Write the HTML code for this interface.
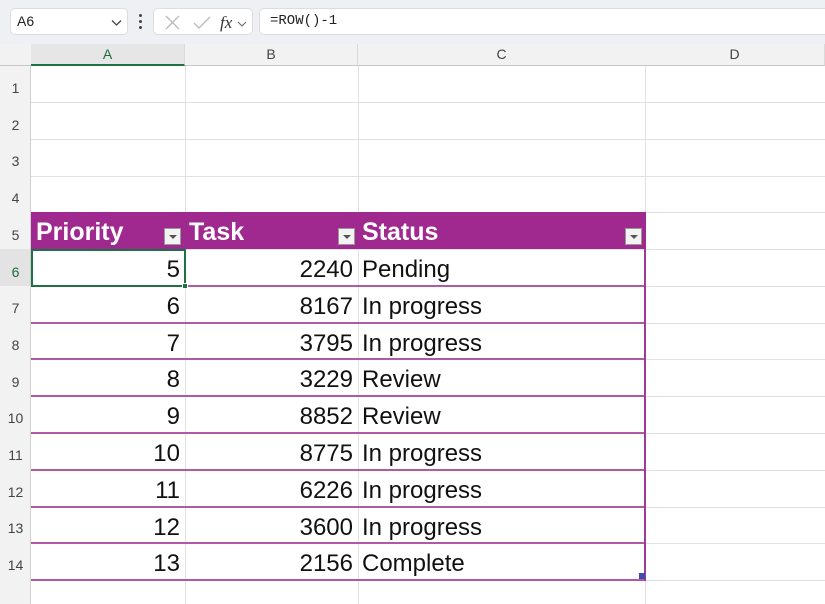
<!DOCTYPE html><html><head><style>
body{margin:0;width:825px;height:604px;overflow:hidden;background:#fff;font-family:"Liberation Sans",sans-serif;position:relative}
div{position:absolute;box-sizing:border-box}
.tb{left:0;top:0;width:825px;height:44px;background:#eef0f3}
.box{background:#fff;border:1px solid #dcdde0;border-radius:5px;top:8px;height:27px}
.ch{top:44px;height:22px;background:#f2f2f2;border-bottom:1px solid #c6c6c6;border-right:1px solid #dadada;font-size:14px;color:#444;text-align:center;line-height:21px}
.rh{left:0;width:31px;background:#f2f2f2;border-right:1px solid #d0d0d0;font-size:14px;color:#444;text-align:center}
.h{height:1px;background:#e1e1e1;left:0;width:825px}
.v{width:1px;background:#e1e1e1;top:66px;height:538px}
.t{font-size:24px;color:#111;white-space:nowrap}
.r{text-align:right}
.pl{height:2px;background:#b05aa6;left:31px;width:615px}
.hd{font-size:25px;color:#fff;font-weight:bold;top:218px}
.fb{width:17px;height:17px;background:#f3f3f3;border:1px solid #999;top:228px}
.fb:after{content:"";position:absolute;left:4px;top:6px;border:4px solid transparent;border-top:4px solid #555}
</style></head><body>
<div class="tb"></div>
<div class="box" style="left:10px;width:118px"><span style="position:absolute;left:6px;top:4px;font-size:14px;color:#222">A6</span><svg style="position:absolute;left:100px;top:10px" width="11" height="8"><path d="M1 1.5L5.5 6L10 1.5" stroke="#444" fill="none" stroke-width="1.3"/></svg></div>
<div style="left:139px;top:14px;width:3px;height:3px;background:#444;border-radius:2px"></div>
<div style="left:139px;top:20px;width:3px;height:3px;background:#444;border-radius:2px"></div>
<div style="left:139px;top:26px;width:3px;height:3px;background:#444;border-radius:2px"></div>
<div class="box" style="left:153px;width:100px"><svg style="position:absolute;left:6px;top:5px" width="90" height="18"><path d="M6 2L19 15M19 2L6 15" stroke="#bbb" stroke-width="1.3"/><path d="M34 9L39 14L50 3" stroke="#bbb" stroke-width="1.3" fill="none"/><text x="60" y="14" font-family="Liberation Serif" font-style="italic" font-size="17" fill="#333">fx</text><path d="M78 8L82 12L86 8" stroke="#666" fill="none"/></svg></div>
<div class="box" style="left:259px;width:580px"><span style="position:absolute;left:10px;top:4px;font-size:14px;color:#222;font-family:'Liberation Mono',monospace">=ROW()-1</span></div>
<div class="ch" style="left:0;width:32px"></div>
<div class="ch" style="left:31px;width:154px;color:#1e6b3c;border-bottom:2px solid #1e7145;background:#e6e6e6">A</div>
<div class="ch" style="left:185px;width:173px">B</div>
<div class="ch" style="left:358px;width:288px">C</div>
<div class="ch" style="left:645px;width:180px">D</div>
<div class="h" style="top:102px"></div><div class="h" style="top:139px"></div><div class="h" style="top:176px"></div><div class="h" style="top:212px"></div><div class="h" style="top:249px"></div><div class="h" style="top:286px"></div><div class="h" style="top:323px"></div><div class="h" style="top:359px"></div><div class="h" style="top:396px"></div><div class="h" style="top:433px"></div><div class="h" style="top:470px"></div><div class="h" style="top:507px"></div><div class="h" style="top:543px"></div><div class="h" style="top:580px"></div>
<div class="v" style="left:185px"></div><div class="v" style="left:358px"></div><div class="v" style="left:645px"></div>
<div class="rh" style="top:66px;height:538px"></div>
<div class="rh" style="top:249px;height:37px;background:#e3e3e3;color:#1e6b3c"></div>
<div style="left:0;top:70px;width:31px;font-size:14px;color:#444;text-align:center;line-height:36.7px">1<br>2<br>3<br>4<br>5<br><span style="color:#1e6b3c">6</span><br>7<br>8<br>9<br>10<br>11<br>12<br>13<br>14</div>
<div style="left:31px;top:212px;width:615px;height:37px;background:#a0298f"></div>
<div class="hd" style="left:36px">Priority</div><div class="hd" style="left:189px">Task</div><div class="hd" style="left:362px">Status</div>
<div class="fb" style="left:164px"></div><div class="fb" style="left:338px"></div><div class="fb" style="left:625px"></div>
<div class="pl" style="top:285px"></div><div class="pl" style="top:322px"></div><div class="pl" style="top:358px"></div><div class="pl" style="top:395px"></div><div class="pl" style="top:432px"></div><div class="pl" style="top:469px"></div><div class="pl" style="top:506px"></div><div class="pl" style="top:542px"></div><div class="pl" style="top:579px"></div>
<div style="left:644px;top:249px;width:2px;height:332px;background:#a03a9a"></div>
<div style="left:639px;top:573px;width:6px;height:6px;background:#3b4fb0"></div>
<div class="t r" style="left:31px;width:149px;top:252px;line-height:36.8px">5<br>6<br>7<br>8<br>9<br>10<br>11<br>12<br>13</div>
<div class="t r" style="left:185px;width:168px;top:252px;line-height:36.8px">2240<br>8167<br>3795<br>3229<br>8852<br>8775<br>6226<br>3600<br>2156</div>
<div class="t" style="left:362px;top:252px;line-height:36.8px">Pending<br>In progress<br>In progress<br>Review<br>Review<br>In progress<br>In progress<br>In progress<br>Complete</div>
<div style="left:31px;top:249px;width:155px;height:38px;border:2px solid #1e7145"></div>
<div style="left:182px;top:283px;width:6px;height:6px;background:#1e7145;border:1px solid #fff"></div>
</body></html>
